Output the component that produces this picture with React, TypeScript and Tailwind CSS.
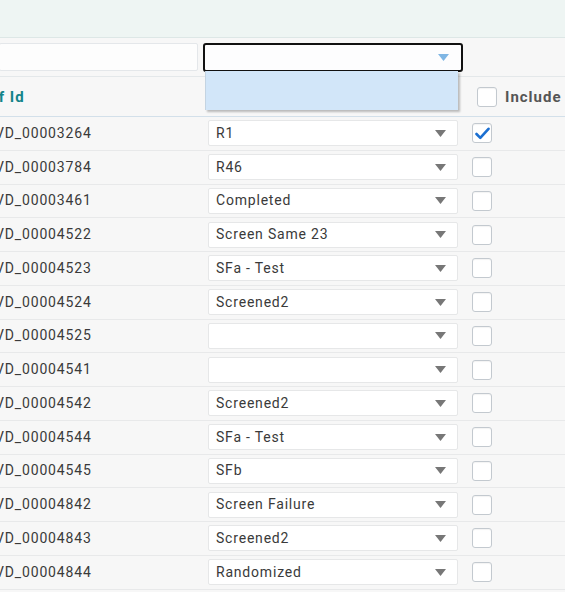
import React from "react";

const rows: { id: string; val: string; checked?: boolean }[] = [
  { id: "VD_00003264", val: "R1", checked: true },
  { id: "VD_00003784", val: "R46" },
  { id: "VD_00003461", val: "Completed" },
  { id: "VD_00004522", val: "Screen Same 23" },
  { id: "VD_00004523", val: "SFa - Test" },
  { id: "VD_00004524", val: "Screened2" },
  { id: "VD_00004525", val: "" },
  { id: "VD_00004541", val: "" },
  { id: "VD_00004542", val: "Screened2" },
  { id: "VD_00004544", val: "SFa - Test" },
  { id: "VD_00004545", val: "SFb" },
  { id: "VD_00004842", val: "Screen Failure" },
  { id: "VD_00004843", val: "Screened2" },
  { id: "VD_00004844", val: "Randomized" },
];

function Arrow({ color }: { color: string }) {
  return (
    <svg width="11" height="7" viewBox="0 0 11 7" className="shrink-0">
      <path d="M0 0 L11 0 L5.5 7 Z" fill={color} />
    </svg>
  );
}

function Checkbox({ checked }: { checked?: boolean }) {
  return (
    <div className="w-[20px] h-[20px] rounded-[3px] border border-[#c3c9cf] bg-white flex items-center justify-center shadow-[inset_0_1px_1px_rgba(0,0,0,0.05)]">
      {checked && (
        <svg width="15" height="13" viewBox="0 0 15 13">
          <path d="M1.5 7 L5.3 10.8 L13.5 1.8" fill="none" stroke="#1b6fd1" strokeWidth="2.6" strokeLinecap="round" strokeLinejoin="round" />
        </svg>
      )}
    </div>
  );
}

export default function App() {
  return (
    <div
      className="relative w-[565px] h-[592px] overflow-hidden bg-[#f7f7f7] text-[#333]"
      style={{ fontFamily: "Roboto, 'Liberation Sans', sans-serif" }}
    >
      <div className="h-[38px] bg-[#eef5f3] border-b border-[#dde7e6]" />
      {/* filter row */}
      <div className="relative h-[38px] flex items-center">
        <div className="w-[203px] shrink-0 flex items-center">
          <div className="w-[199px] h-[28px] bg-[#fdfdfd] border border-[#e4e7ea] rounded-[2px] -ml-[1px]" />
        </div>
        <div className="w-[260px] h-[29px] border-2 border-[#111] rounded-[3px] bg-[#fdfdfe] flex items-center justify-end pr-[12px]">
          <Arrow color="#7fb6e4" />
        </div>
        <div className="absolute left-[205px] top-[33px] w-[253px] h-[39px] bg-[#d2e6f9] border-l border-[#c4d4e2] shadow-[2px_2px_2px_rgba(0,0,0,0.25)] z-10" />
      </div>
      {/* header */}
      <div className="h-[41px] border-t border-[#e4e8ea] border-b border-b-[#d3e0ea] flex items-center pt-[1px]">
        <div className="w-[203px] shrink-0 overflow-hidden">
          <span className="block -ml-[21px] text-[15px] font-bold tracking-[1px] text-[#13848a] whitespace-nowrap">Ref Id</span>
        </div>
        <div className="w-[274px] shrink-0" />
        <Checkbox />
        <span className="ml-[8px] text-[15px] font-bold tracking-[1px] text-[#555] whitespace-nowrap">Include</span>
      </div>
      {/* rows */}
      {rows.map((r, i) => (
        <div key={i} className="h-[33.75px] border-b border-[#e8e9ea] flex items-center">
          <div className="w-[203px] shrink-0 overflow-hidden">
            <span className="block -ml-[5px] text-[14px] tracking-[0.85px] whitespace-nowrap text-[#3a3a3a]">{r.id}</span>
          </div>
          <div className="ml-[5px] w-[250px] h-[26px] bg-white border border-[#e6e7e8] rounded-[2px] flex items-center pl-[7px] pr-[11px]">
            <span className="flex-1 text-[14px] tracking-[0.8px] text-[#3a3a3a] whitespace-nowrap">{r.val}</span>
            <Arrow color="#777" />
          </div>
          <div className="ml-[14px]">
            <Checkbox checked={r.checked} />
          </div>
        </div>
      ))}
    </div>
  );
}
